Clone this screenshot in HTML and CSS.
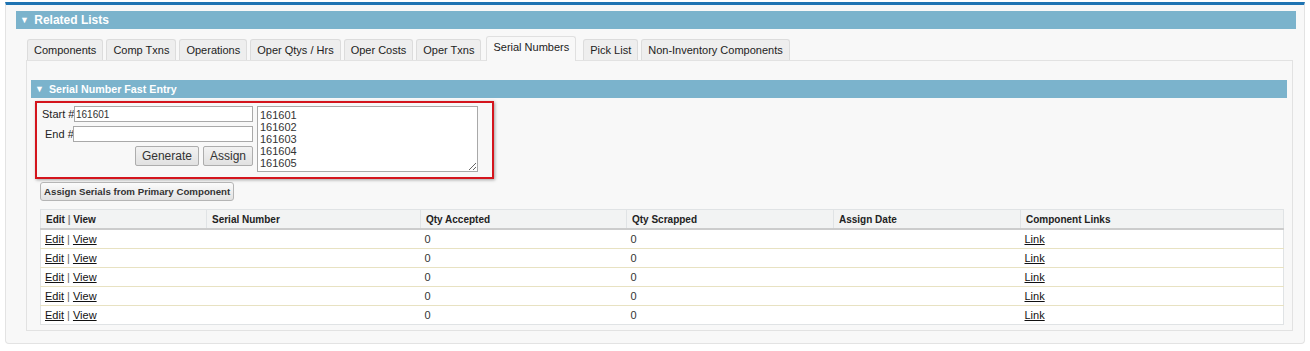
FILE: index.html
```html
<!DOCTYPE html>
<html lang="en">
<head>
    <meta charset="UTF-8">
    <title>Serial Numbers</title>
    <link rel="stylesheet" href="styles.css">
</head>
<body>
    <div class="page">
        <div class="outer">
            <div class="section-bar"><span class="arrow">&#9660;</span> Related Lists</div>

            <div class="tabs">
                <div class="tab">Components</div>
                <div class="tab">Comp Txns</div>
                <div class="tab">Operations</div>
                <div class="tab">Oper Qtys / Hrs</div>
                <div class="tab">Oper Costs</div>
                <div class="tab">Oper Txns</div>
                <div class="tab active">Serial Numbers</div>
                <div class="tab">Pick List</div>
                <div class="tab">Non-Inventory Components</div>
            </div>

            <div class="tab-panel">
                <div class="section-bar sub"><span class="arrow">&#9660;</span> Serial Number Fast Entry</div>

                <div class="fast-entry">
                    <div class="fe-form">
                        <div class="fe-row">
                            <label class="fe-label">Start #</label>
                            <input class="fe-input" type="text" value="161601">
                        </div>
                        <div class="fe-row">
                            <label class="fe-label end">End #</label>
                            <input class="fe-input" type="text">
                        </div>
                        <div class="fe-buttons">
                            <button class="btn">Generate</button>
                            <button class="btn">Assign</button>
                        </div>
                    </div>
                    <textarea class="fe-list">161601
161602
161603
161604
161605</textarea>
                </div>

                <button class="btn-small">Assign Serials from Primary Component</button>

                <table class="list">
                    <colgroup>
                        <col style="width:166px">
                        <col style="width:214px">
                        <col style="width:206px">
                        <col style="width:207px">
                        <col style="width:187px">
                        <col>
                    </colgroup>
                    <thead>
                        <tr>
                            <th>Edit <span class="sep">|</span> View</th>
                            <th>Serial Number</th>
                            <th>Qty Accepted</th>
                            <th>Qty Scrapped</th>
                            <th>Assign Date</th>
                            <th>Component Links</th>
                        </tr>
                    </thead>
                    <tbody>
                        <tr><td><a href="#">Edit</a> <span class="sep">|</span> <a href="#">View</a></td><td></td><td>0</td><td>0</td><td></td><td><a href="#">Link</a></td></tr>
                        <tr><td><a href="#">Edit</a> <span class="sep">|</span> <a href="#">View</a></td><td></td><td>0</td><td>0</td><td></td><td><a href="#">Link</a></td></tr>
                        <tr><td><a href="#">Edit</a> <span class="sep">|</span> <a href="#">View</a></td><td></td><td>0</td><td>0</td><td></td><td><a href="#">Link</a></td></tr>
                        <tr><td><a href="#">Edit</a> <span class="sep">|</span> <a href="#">View</a></td><td></td><td>0</td><td>0</td><td></td><td><a href="#">Link</a></td></tr>
                        <tr class="last"><td><a href="#">Edit</a> <span class="sep">|</span> <a href="#">View</a></td><td></td><td>0</td><td>0</td><td></td><td><a href="#">Link</a></td></tr>
                    </tbody>
                </table>
            </div>
        </div>
    </div>
</body>
</html>
```

FILE: styles.css
```css
body {
    margin: 0;
    background: #ffffff;
    font-family: "Liberation Sans", Arial, sans-serif;
    color: #222;
}

.page {
    padding: 2px 5px 0 5px;
}

.outer {
    border-top: 3px solid #1f74b3;
    border-left: 1px solid #e3e3e3;
    border-right: 1px solid #e3e3e3;
    border-bottom: 1px solid #e3e3e3;
    border-radius: 0 0 4px 4px;
    background: #f8f8f8;
    padding: 6px 8px 12px 10px;
}

.section-bar {
    height: 18px;
    line-height: 18px;
    background: #7bb3cc;
    color: #fff;
    font-size: 12px;
    font-weight: bold;
    padding-left: 4px;
}

.section-bar.sub {
    font-size: 10.7px;
}

.section-bar .arrow {
    font-size: 9px;
    vertical-align: 1px;
    margin-right: 2px;
}

/* Tabs */
.tabs {
    display: flex;
    align-items: flex-end;
    gap: 3px;
    margin: 10px 0 0 11px;
    height: 21px;
    position: relative;
    z-index: 1;
}

.tab {
    height: 20px;
    line-height: 20px;
    padding: 0 6px;
    font-size: 11px;
    color: #222;
    background: #eeeeee;
    border: 1px solid #dcdcdc;
    border-bottom: none;
    border-radius: 3px 3px 0 0;
}

.tab.active {
    background: #f8f8f8;
    height: 24px;
    line-height: 20px;
    margin: 0 4px 0 2px;
    padding: 0 6px;
    border-color: #e0e0e0;
    margin-bottom: -1px;
}

.tab-panel {
    margin: 0 3px 0 10px;
    border: 1px solid #e2e2e2;
    background: #f8f8f8;
    padding: 19px 5px 5px 4px;
}

/* Fast entry */
.fast-entry {
    display: flex;
    gap: 4px;
    width: 459px;
    height: 78px;
    box-sizing: border-box;
    margin: 3px 0 0 4px;
    padding: 3px 14px 0 5px;
    border: 2px solid #d4151d;
    box-shadow: 1px 1px 3px rgba(0, 0, 0, 0.35);
}

.fe-form {
    display: flex;
    flex-direction: column;
    width: 211px;
}

.fe-row {
    display: flex;
    align-items: center;
    height: 16px;
    margin-bottom: 4px;
}

.fe-label {
    font-size: 11px;
    width: 32px;
    white-space: nowrap;
}

.fe-label.end {
    padding-left: 3px;
    width: 28px;
}

.fe-input {
    flex: 1;
    min-width: 0;
    height: 16px;
    box-sizing: border-box;
    border: 1px solid #a9a9a9;
    font-family: "Liberation Sans", Arial, sans-serif;
    font-size: 10px;
    padding: 0 1px;
    background: #fff;
    color: #333;
}

.fe-buttons {
    display: flex;
    justify-content: flex-end;
    gap: 4px;
}

.btn {
    height: 20px;
    padding: 0 6px;
    font-family: "Liberation Sans", Arial, sans-serif;
    font-size: 12px;
    color: #333;
    border: 1px solid #adadad;
    border-radius: 2px;
    background: linear-gradient(#f2f2f2, #e1e1e1);
}

.fe-list {
    width: 221px;
    height: 66px;
    box-sizing: border-box;
    border: 1px solid #a9a9a9;
    font-family: "Liberation Sans", Arial, sans-serif;
    font-size: 11px;
    line-height: 12px;
    padding: 2px 2px;
    color: #333;
    resize: both;
    overflow: hidden;
}

.btn-small {
    display: block;
    margin: 3px 0 0 9px;
    height: 19px;
    padding: 0 3px;
    font-family: "Liberation Sans", Arial, sans-serif;
    font-size: 9.7px;
    font-weight: bold;
    color: #333;
    border: 1px solid #b5b5b5;
    border-radius: 3px;
    background: linear-gradient(#fbfbfb, #e2e2e2);
}

/* Related list table */
.list {
    margin: 8px 0 0 9px;
    width: 1244px;
    table-layout: fixed;
    border-collapse: collapse;
    font-size: 11px;
    background: #fff;
    border: 1px solid #e0e3e5;
}

.list th {
    height: 18px;
    text-align: left;
    font-size: 10px;
    font-weight: bold;
    color: #222;
    background: #f2f3f3;
    border-left: 1px solid #e0e3e5;
    border-bottom: 2px solid #cccccc;
    padding: 0 5px;
}

.list th:first-child {
    border-left: none;
}

.list th .sep {
    color: #888;
}

.list td {
    height: 18px;
    padding: 0 4px;
    color: #333;
    border-bottom: 1px solid #e8e2c2;
}

.list tr.last td {
    border-bottom: 1px solid #e0e3e5;
}

.list a {
    color: #111;
    text-decoration: underline;
}

.list td .sep {
    color: #666;
}
```
